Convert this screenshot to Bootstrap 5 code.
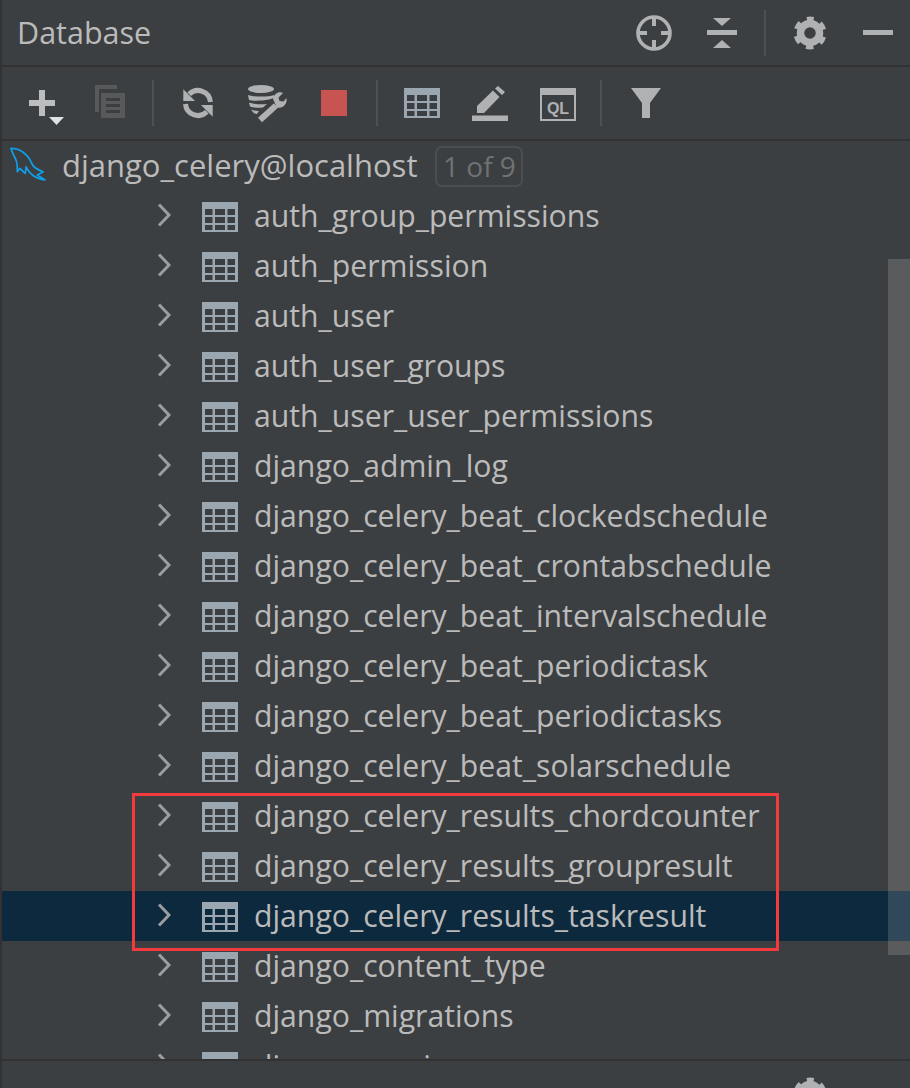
<!DOCTYPE html>
<html lang="en">
<head>
<meta charset="utf-8">
<title>Database</title>
<link href="https://cdn.jsdelivr.net/npm/bootstrap@5.3.0/dist/css/bootstrap.min.css" rel="stylesheet">
<style>
html, body { height: 100%; }
body { background: #3c3f41; overflow: hidden; font-family: "Open Sans", "Liberation Sans", sans-serif; color: #bbbbbb; }
.db-app { position: relative; width: 910px; height: 1088px; border-left: 2px solid #323232; overflow: hidden; }
.db-head { height: 67px; padding-top: 1px; padding-left: 15px; padding-right: 10px; border-bottom: 2px solid #323232; }
.db-title { font-size: 30.500px; line-height: 40px; margin: -3px 0 0; color: #bbbbbb; font-weight: 400; }
.db-tools { height: 74px; padding-left: 18px; border-bottom: 2px solid #323232; }
.db-cell { display: block; width: 44px; height: 44px; flex: none; fill: #afb1b3; }
.db-gap { gap: 24px; }
.db-sep { width: 2px; height: 46px; background: #4e5052; flex: none; margin: 0 22px 0 20px; }
.db-tree { height: 918px; overflow: hidden; }
.db-root { height: 50px; padding-left: 6px; font-size: 31px; }
.db-root-name { margin-left: 12px; margin-top: -2px; white-space: nowrap; }
.db-count { margin-left: 18px; height: 41px; width: 88px; border: 2px solid #4b4e50; border-radius: 7px; font-size: 28px; line-height: 36px; color: #6f7274; text-align: center; white-space: nowrap; }
.db-row { height: 50px; padding-left: 155px; font-size: 30.200px; line-height: 50px; white-space: nowrap; }
.db-row.db-active { background: #0d293e; }
.db-chev { display: block; width: 14px; height: 24px; flex: none; margin-right: 31px; margin-top: -2px; fill: none; stroke: #9b9d9f; stroke-width: 3; }
.db-tbl { display: block; width: 36px; height: 30px; flex: none; margin-right: 16px; margin-top: 2px; fill: #9aa7b0; }
.db-foot { height: 29px; border-top: 2px solid #323232; padding-top: 11px; padding-left: 786px; overflow: hidden; }
.db-scroll { position: absolute; left: 886px; top: 259px; width: 22px; height: 696px; background: rgba(255,255,255,.15); }
.db-mark { position: absolute; left: 130px; top: 793px; width: 647px; height: 158px; border: 3px solid #f43b3b; }
</style>
</head>
<body>
<svg width="0" height="0" class="position-absolute">
  <defs>
    <symbol id="i-tbl" viewBox="0 0 36 30"><path fill-rule="evenodd" d="M0 0H36V30H0ZM3 7V13H10.500V7ZM13 7V13H23V7ZM25.500 7V13H33V7ZM3 15V21H10.500V15ZM13 15V21H23V15ZM25.500 15V21H33V15ZM3 23V28H10.500V23ZM13 23V28H23V23ZM25.500 23V28H33V23Z"/></symbol>
    <symbol id="i-chev" viewBox="0 0 14 24"><path d="M2 1.500 12 12 2 22.500"/></symbol>
    <symbol id="i-gear" viewBox="0 0 44 44">
      <circle cx="22" cy="22" r="9.500" fill="none" stroke="#afb1b3" stroke-width="7.500"/>
      <circle cx="22" cy="22" r="14" fill="none" stroke="#afb1b3" stroke-width="5" stroke-dasharray="7.300 7.360" stroke-dashoffset="3.650" transform="rotate(-90 22 22)"/>
    </symbol>
  </defs>
</svg>

<div class="db-app">
  <header class="db-head d-flex align-items-center">
    <h1 class="db-title">Database</h1>
    <div class="d-flex align-items-center ms-auto db-gap">
      <svg class="db-cell" viewBox="0 0 44 44"><circle cx="22" cy="22" r="16" fill="none" stroke="#afb1b3" stroke-width="3.600"/><path d="M6 20H15V24H6ZM29 20H38V24H29ZM20 6H24V15H20ZM20 29H24V38H20Z"/></svg>
      <svg class="db-cell" viewBox="0 0 44 44"><path d="M7 19H37V24H7ZM13 7H31L22 15ZM22 29 31 37H13Z"/></svg>
    </div>
    <span class="db-sep"></span>
    <div class="d-flex align-items-center db-gap">
      <svg class="db-cell" viewBox="0 0 44 44"><use href="#i-gear"/></svg>
      <svg class="db-cell" viewBox="0 0 44 44"><path d="M7 19H37V24H7Z"/></svg>
    </div>
  </header>

  <div class="db-tools d-flex align-items-center">
    <div class="d-flex db-gap">
      <svg class="db-cell" viewBox="0 0 44 44"><path d="M9 19H19V9H25V19H35V25H25V35H19V25H9Z" fill="#bbbdbf"/><path d="M29 36H44L36.500 44Z" fill="#dfe1e3"/></svg>
      <svg class="db-cell" viewBox="0 0 44 44"><path fill="#57595b" fill-rule="evenodd" d="M7 4H29V8H11V31H7ZM13 12H37V37H13ZM18 17V20H32V17ZM18 23V26H32V23ZM18 29V32H32V29Z"/></svg>
    </div>
    <span class="db-sep"></span>
    <div class="d-flex db-gap">
      <svg class="db-cell" viewBox="0 0 44 44"><path d="M13.200 13.200A12.500 12.500 0 0 1 34.500 21M30.800 30.800A12.500 12.500 0 0 1 9.500 23" fill="none" stroke="#afb1b3" stroke-width="5"/><path d="M7.300 8.300V20H19ZM36.700 35.700V24H25Z"/></svg>
      <svg class="db-cell" viewBox="0 0 44 44">
        <ellipse cx="17" cy="8" rx="13" ry="4"/>
        <path d="M4 14C9 16 25 16 30 14V17L25 18.500C18 20 8 20 5 19ZM5 21.500C9 23 16 23.500 23 23L19 26.500C13 27 9 26.500 6 25.500ZM7 28.500C9 29.500 12 30 15 30L13 33C11 33 9 32 7 28.500Z"/>
        <path d="M16 39 32 24.500" fill="none" stroke="#afb1b3" stroke-width="6"/>
        <path d="M29 18C30 12.500 35 10 39 12L34.500 16.500 35.500 20 39.500 20.500 42.500 17C43.500 23 39 28 33 26.500Z"/>
      </svg>
      <svg class="db-cell" viewBox="0 0 44 44"><path d="M9 9H35V35H9Z" fill="#c75450"/></svg>
    </div>
    <span class="db-sep"></span>
    <div class="d-flex db-gap">
      <svg class="db-cell" viewBox="0 0 44 44"><svg x="4" y="7" width="36" height="30" viewBox="0 0 36 30"><use href="#i-tbl" width="36" height="30" fill="#9aa7b0"/></svg></svg>
      <svg class="db-cell" viewBox="0 0 44 44"><path d="M4 34.500H40V40H4ZM9 32V25L25 9.500 31.500 16 16 32ZM27 7.500 30 5 37 11 34 14Z"/></svg>
      <svg class="db-cell" viewBox="0 0 44 44"><path fill-rule="evenodd" d="M4 7H40V40H4ZM6 14V38H38V14Z"/><text x="22" y="33" text-anchor="middle" font-family="Liberation Sans, sans-serif" font-weight="700" font-size="16" fill="#afb1b3">QL</text></svg>
    </div>
    <span class="db-sep"></span>
    <svg class="db-cell" viewBox="0 0 44 44"><path d="M7 7H37L26 22V37H18V22Z"/></svg>
  </div>

  <div class="db-tree">
    <div class="db-root d-flex align-items-center">
      <svg width="42" height="42" viewBox="0 0 42 42" fill="none" stroke="#0f9fe8" stroke-width="1.700" stroke-linejoin="round" class="d-block flex-none"><path d="M3 3.300C8 3.300 12 4.500 16 8 20 11 22 14 24 19 26 23 30 25 35.300 26.700L29.300 30 37 35C32 34 29 33 27 31.700 22 29 20 26 18 21.700 18 24 18 26 17 28.300L12 23.300 9.300 26.700C9.500 22 9.500 19 8 15 6 11 4 7 3 3.300Z"/></svg>
      <span class="db-root-name">django_celery@localhost</span>
      <span class="db-count">1 of 9</span>
    </div>
    <div class="db-row d-flex align-items-center"><svg class="db-chev"><use href="#i-chev"/></svg><svg class="db-tbl"><use href="#i-tbl"/></svg><span>auth_group_permissions</span></div>
    <div class="db-row d-flex align-items-center"><svg class="db-chev"><use href="#i-chev"/></svg><svg class="db-tbl"><use href="#i-tbl"/></svg><span>auth_permission</span></div>
    <div class="db-row d-flex align-items-center"><svg class="db-chev"><use href="#i-chev"/></svg><svg class="db-tbl"><use href="#i-tbl"/></svg><span>auth_user</span></div>
    <div class="db-row d-flex align-items-center"><svg class="db-chev"><use href="#i-chev"/></svg><svg class="db-tbl"><use href="#i-tbl"/></svg><span>auth_user_groups</span></div>
    <div class="db-row d-flex align-items-center"><svg class="db-chev"><use href="#i-chev"/></svg><svg class="db-tbl"><use href="#i-tbl"/></svg><span>auth_user_user_permissions</span></div>
    <div class="db-row d-flex align-items-center"><svg class="db-chev"><use href="#i-chev"/></svg><svg class="db-tbl"><use href="#i-tbl"/></svg><span>django_admin_log</span></div>
    <div class="db-row d-flex align-items-center"><svg class="db-chev"><use href="#i-chev"/></svg><svg class="db-tbl"><use href="#i-tbl"/></svg><span>django_celery_beat_clockedschedule</span></div>
    <div class="db-row d-flex align-items-center"><svg class="db-chev"><use href="#i-chev"/></svg><svg class="db-tbl"><use href="#i-tbl"/></svg><span>django_celery_beat_crontabschedule</span></div>
    <div class="db-row d-flex align-items-center"><svg class="db-chev"><use href="#i-chev"/></svg><svg class="db-tbl"><use href="#i-tbl"/></svg><span>django_celery_beat_intervalschedule</span></div>
    <div class="db-row d-flex align-items-center"><svg class="db-chev"><use href="#i-chev"/></svg><svg class="db-tbl"><use href="#i-tbl"/></svg><span>django_celery_beat_periodictask</span></div>
    <div class="db-row d-flex align-items-center"><svg class="db-chev"><use href="#i-chev"/></svg><svg class="db-tbl"><use href="#i-tbl"/></svg><span>django_celery_beat_periodictasks</span></div>
    <div class="db-row d-flex align-items-center"><svg class="db-chev"><use href="#i-chev"/></svg><svg class="db-tbl"><use href="#i-tbl"/></svg><span>django_celery_beat_solarschedule</span></div>
    <div class="db-row d-flex align-items-center"><svg class="db-chev"><use href="#i-chev"/></svg><svg class="db-tbl"><use href="#i-tbl"/></svg><span>django_celery_results_chordcounter</span></div>
    <div class="db-row d-flex align-items-center"><svg class="db-chev"><use href="#i-chev"/></svg><svg class="db-tbl"><use href="#i-tbl"/></svg><span>django_celery_results_groupresult</span></div>
    <div class="db-row db-active d-flex align-items-center"><svg class="db-chev"><use href="#i-chev"/></svg><svg class="db-tbl"><use href="#i-tbl"/></svg><span>django_celery_results_taskresult</span></div>
    <div class="db-row d-flex align-items-center"><svg class="db-chev"><use href="#i-chev"/></svg><svg class="db-tbl"><use href="#i-tbl"/></svg><span>django_content_type</span></div>
    <div class="db-row d-flex align-items-center"><svg class="db-chev"><use href="#i-chev"/></svg><svg class="db-tbl"><use href="#i-tbl"/></svg><span>django_migrations</span></div>
    <div class="db-row d-flex align-items-center"><svg class="db-chev"><use href="#i-chev"/></svg><svg class="db-tbl"><use href="#i-tbl"/></svg><span>django_session</span></div>
  </div>

  <div class="db-foot">
    <svg class="db-cell" viewBox="0 0 44 44"><use href="#i-gear"/></svg>
  </div>

  <div class="db-scroll"></div>
  <div class="db-mark"></div>
</div>
<script src="https://cdn.jsdelivr.net/npm/bootstrap@5.3.0/dist/js/bootstrap.bundle.min.js"></script>
</body>
</html>
